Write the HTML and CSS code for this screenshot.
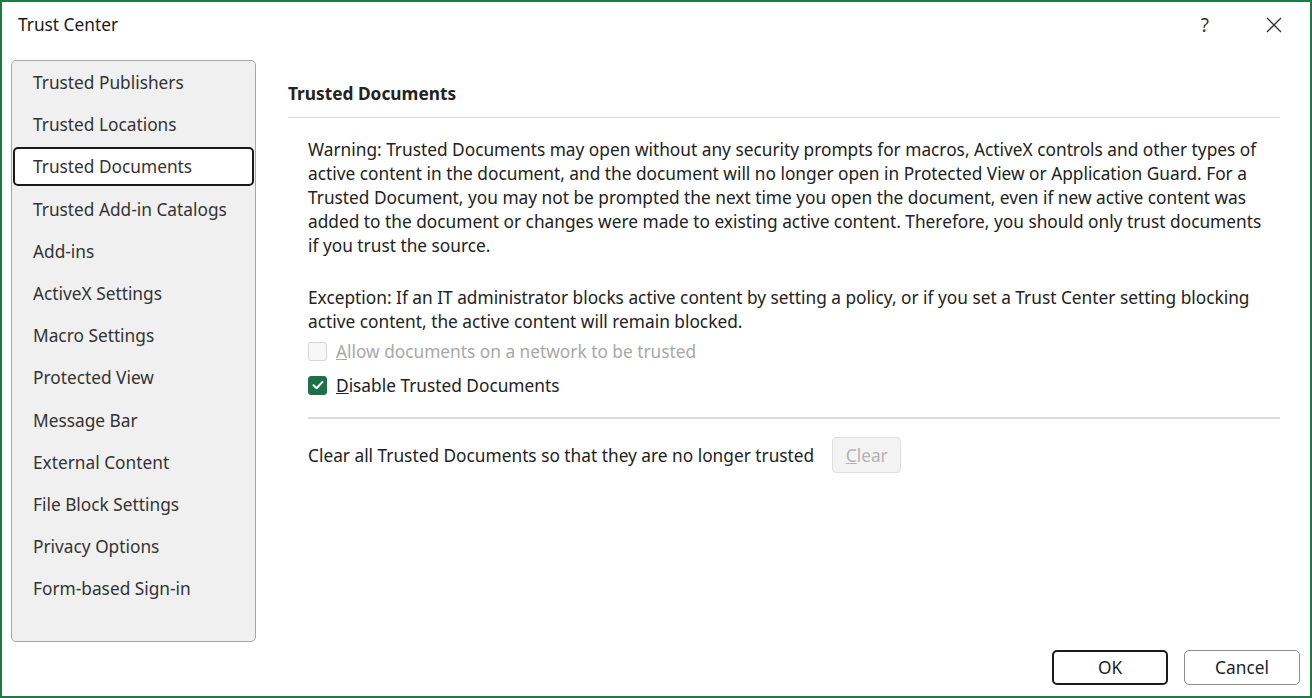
FILE: index.html
```html
<!DOCTYPE html>
<html lang="en">
<head>
    <meta charset="UTF-8">
    <title>Trust Center</title>
    <link rel="stylesheet" href="styles.css">
</head>
<body>
    <div class="dialog">
        <div class="title-bar">
            <span class="title">Trust Center</span>
            <div class="title-buttons">
                <span class="help">?</span>
                <svg class="close" width="16" height="16" viewBox="0 0 16 16">
                    <path d="M1 1 L15 15 M15 1 L1 15" stroke="#333" stroke-width="1.3" fill="none"/>
                </svg>
            </div>
        </div>

        <div class="main">
            <ul class="nav">
                <li>Trusted Publishers</li>
                <li>Trusted Locations</li>
                <li class="selected">Trusted Documents</li>
                <li>Trusted Add-in Catalogs</li>
                <li>Add-ins</li>
                <li>ActiveX Settings</li>
                <li>Macro Settings</li>
                <li>Protected View</li>
                <li>Message Bar</li>
                <li>External Content</li>
                <li>File Block Settings</li>
                <li>Privacy Options</li>
                <li>Form-based Sign-in</li>
            </ul>

            <div class="content">
                <h2>Trusted Documents</h2>
                <div class="section">
                    <p class="warning">
                        <span class="line">Warning: Trusted Documents may open without any security prompts for macros, ActiveX controls and other types of</span>
                        <span class="line">active content in the document, and the document will no longer open in Protected View or Application Guard. For a</span>
                        <span class="line">Trusted Document, you may not be prompted the next time you open the document, even if new active content was</span>
                        <span class="line">added to the document or changes were made to existing active content. Therefore, you should only trust documents</span>
                        <span class="line">if you trust the source.</span>
                    </p>
                    <p class="exception">
                        <span class="line">Exception: If an IT administrator blocks active content by setting a policy, or if you set a Trust Center setting blocking</span>
                        <span class="line">active content, the active content will remain blocked.</span>
                    </p>

                    <label class="check disabled">
                        <span class="box"></span>
                        <span><u>A</u>llow documents on a network to be trusted</span>
                    </label>
                    <label class="check">
                        <span class="box checked">
                            <svg width="14" height="14" viewBox="0 0 14 14">
                                <path d="M2.5 7.2 L5.6 10.2 L11.5 3.9" stroke="#fff" stroke-width="2" fill="none" stroke-linecap="round" stroke-linejoin="round"/>
                            </svg>
                        </span>
                        <span><u>D</u>isable Trusted Documents</span>
                    </label>

                    <div class="clear-row">
                        <span>Clear all Trusted Documents so that they are no longer trusted</span>
                        <button class="clear-btn" disabled><u>C</u>lear</button>
                    </div>
                </div>
            </div>
        </div>

        <div class="footer">
            <button class="ok">OK</button>
            <button class="cancel">Cancel</button>
        </div>
    </div>
</body>
</html>
```

FILE: styles.css
```css
* {
    box-sizing: border-box;
}
body {
    margin: 0;
    font-family: "Noto Sans", "Open Sans", sans-serif;
    font-size: 17.3px;
    color: #222;
    background-color: #fff;
}
.dialog {
    width: 1312px;
    height: 698px;
    border: 2px solid #1f7a45;
    display: flex;
    flex-direction: column;
    overflow: hidden;
}
.title-bar {
    height: 58px;
    display: flex;
    justify-content: space-between;
    padding: 11px 0 0 16px;
}
.title {
    line-height: 24px;
    color: #1a1a1a;
}
.title-buttons {
    display: flex;
    gap: 57px;
    padding-right: 28px;
}
.help {
    font-size: 19px;
    line-height: 24px;
    color: #333;
}
.close {
    margin-top: 4px;
}
/* Left navigation */
.main {
    flex: 1;
    display: flex;
}
.nav {
    list-style: none;
    margin: 0 0 0 9px;
    padding: 0;
    width: 245px;
    height: 582px;
    display: flex;
    flex-direction: column;
    background-color: #f0f0f0;
    border: 1px solid #a6a6a6;
    border-radius: 5px;
}
.nav li {
    height: 38.2px;
    flex-shrink: 0;
    margin: 2px 1px;
    padding-left: 18px;
    line-height: 36px;
    color: #333;
    border: 2px solid transparent;
    border-radius: 5px;
}
.nav li.selected {
    background-color: #fff;
    border-color: #1a1a1a;
}
/* Right content */
.content {
    flex: 1;
    margin: 0 30px 0 32px;
}
h2 {
    margin: 0;
    padding: 22px 0 11px;
    font-size: 17.3px;
    font-weight: bold;
    line-height: 24px;
    border-bottom: 1px solid #d9d9d9;
}
.section {
    padding-left: 20px;
}
p {
    margin: 0;
    line-height: 24px;
}
.line {
    display: block;
    white-space: nowrap;
}
.warning {
    margin-top: 20px;
}
.exception {
    margin-top: 28px;
}
.check {
    display: flex;
    align-items: center;
    gap: 9px;
    height: 34px;
}
.check.disabled {
    color: #a8a8a8;
}
.box {
    width: 19px;
    height: 19px;
    border: 1px solid #8a8a8a;
    border-radius: 3px;
    display: flex;
    align-items: center;
    justify-content: center;
}
.disabled .box {
    border-color: #d6d6d6;
    background-color: #f7f7f7;
}
.box.checked {
    background-color: #1e7145;
    border-color: #1e7145;
}
.clear-row {
    margin-top: 15px;
    border-top: 2px solid #dcdcdc;
    padding-top: 18px;
    display: flex;
    align-items: center;
    gap: 18px;
}
button {
    font-family: inherit;
    font-size: 17.3px;
}
.clear-btn {
    width: 69px;
    height: 36px;
    background-color: #f3f3f3;
    border: 1px solid #e0e0e0;
    border-radius: 4px;
    color: #b4b4b4;
}
.footer {
    display: flex;
    justify-content: flex-end;
    gap: 16px;
    padding: 0 10px 11px 0;
}
.ok, .cancel {
    width: 116px;
    height: 35px;
    background-color: #fff;
    border-radius: 5px;
    color: #1f1f1f;
}
.ok {
    border: 2px solid #1a1a1a;
}
.cancel {
    border: 1px solid #8f8f8f;
}
```
